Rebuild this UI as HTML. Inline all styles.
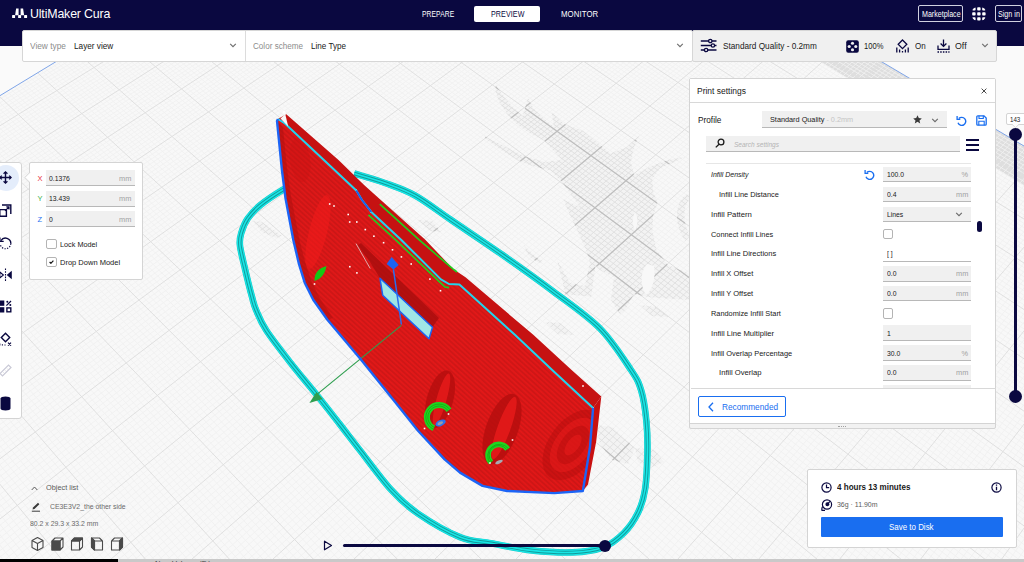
<!DOCTYPE html>
<html><head><meta charset="utf-8"><title>UltiMaker Cura</title>
<style>
*{box-sizing:border-box;margin:0;padding:0}
html,body{width:1024px;height:562px;overflow:hidden;background:#f8f8f8}
body{position:relative;font-family:"Liberation Sans","DejaVu Sans",sans-serif;font-size:8.5px;color:#191919}
.abs{position:absolute}
.t{position:absolute;white-space:nowrap;line-height:1}
#scene{position:absolute;left:0;top:0;width:1024px;height:562px}
#hdr{left:0;top:0;width:1024px;height:46px;background:#0a0840}
.nav{color:#fff;font-size:8.6px;letter-spacing:0.1px}
.pill{background:#fff;border-radius:2px}
.hbtn{border:1px solid #d0d0e0;border-radius:2px;color:#fff;font-size:8px;text-align:center}
#viewbar{left:22px;top:30px;width:671px;height:32px;background:#fff;border:1px solid #d6d6d6;border-radius:2px}
#setbar{left:692px;top:30px;width:305px;height:32px;background:#f0f0f0;border:1px solid #d6d6d6;border-radius:2px}
.g{color:#8c8c8c}
.panel{background:#fff;border:1px solid #d4d4d4;border-radius:2px}
.fld{position:absolute;background:#f0f0f0;border-bottom:1px solid #b8b8b8;height:16px}
.fld .v{position:absolute;left:2.5px;top:4.6px;font-size:8px;line-height:1;color:#191919;transform:scaleX(.85);transform-origin:0 0}
.fld .u{position:absolute;right:3px;top:4.6px;transform:scaleX(.92);transform-origin:100% 0;font-size:8px;line-height:1;color:#a0a0a0}
.cb{position:absolute;width:10.5px;height:10.5px;border:1px solid #b4b4b4;border-radius:2px;background:#fff}
.row{position:absolute;left:711px;font-size:8px;line-height:1;white-space:nowrap;color:#191919}
#logo{transform:scaleX(1.014);transform-origin:0 0;left:29.5px !important}
#n1{transform:scaleX(0.783);transform-origin:0 0;left:421.5px !important}
#n2{transform:scaleX(0.830);transform-origin:0 0;left:490.5px !important}
#n3{transform:scaleX(0.907);transform-origin:0 0;left:560.5px !important}
#mk{transform:scaleX(0.805);transform-origin:0 0;left:921.5px !important}
#si{transform:scaleX(0.814);transform-origin:0 0;left:998.0px !important}
#vt{transform:scaleX(0.978);transform-origin:0 0;left:30.0px !important}
#lv{transform:scaleX(0.967);transform-origin:0 0;left:74.0px !important}
#cs{transform:scaleX(0.954);transform-origin:0 0;left:253.0px !important}
#lt{transform:scaleX(0.953);transform-origin:0 0;left:311.0px !important}
#sq{transform:scaleX(0.915);transform-origin:0 0;left:722.5px !important}
#pc{transform:scaleX(0.842);transform-origin:0 0;left:864.0px !important}
#on{transform:scaleX(0.891);transform-origin:0 0;left:914.5px !important}
#off{transform:scaleX(0.979);transform-origin:0 0;left:954.5px !important}
#ps{transform:scaleX(0.923);transform-origin:0 0;left:697.0px !important}
#pf{transform:scaleX(0.898);transform-origin:0 0;left:697.5px !important}
#sq2{transform:scaleX(0.912);transform-origin:0 0;left:770.0px !important}
#ss{transform:scaleX(0.860);transform-origin:0 0;left:734.0px !important}
#row0{transform:scaleX(0.870);transform-origin:0 0;left:20.5px !important}
#row1{transform:scaleX(0.921);transform-origin:0 0;left:28.5px !important}
#row2{transform:scaleX(0.968);transform-origin:0 0;left:20.5px !important}
#row3{transform:scaleX(0.920);transform-origin:0 0;left:20.5px !important}
#row4{transform:scaleX(0.940);transform-origin:0 0;left:20.5px !important}
#row5{transform:scaleX(0.934);transform-origin:0 0;left:20.5px !important}
#row6{transform:scaleX(0.939);transform-origin:0 0;left:20.5px !important}
#row7{transform:scaleX(0.919);transform-origin:0 0;left:20.5px !important}
#row8{transform:scaleX(0.960);transform-origin:0 0;left:20.5px !important}
#row9{transform:scaleX(0.926);transform-origin:0 0;left:20.5px !important}
#row10{transform:scaleX(0.958);transform-origin:0 0;left:28.5px !important}
#rec{transform:scaleX(0.963);transform-origin:0 0;left:721.5px !important}
#tm{transform:scaleX(0.895);transform-origin:0 0;left:836.5px !important}
#mat{transform:scaleX(0.870);transform-origin:0 0;left:836.5px !important}
#sv{transform:scaleX(0.924);transform-origin:0 0;left:889.0px !important}
#ol{transform:scaleX(0.943);transform-origin:0 0;left:46.0px !important}
#on2{transform:scaleX(0.881);transform-origin:0 0;left:50.0px !important}
#dim{transform:scaleX(0.908);transform-origin:0 0;left:30.0px !important}
#lm{transform:scaleX(0.909);transform-origin:0 0;left:60.0px !important}
#ddm{transform:scaleX(0.939);transform-origin:0 0;left:60.0px !important}
#l143{transform:scaleX(0.813);transform-origin:0 0;left:1009.5px !important}
</style></head><body>
<svg id="scene" width="1024" height="562" viewBox="0 0 1024 562">
<defs><clipPath id="ghost"><path d="M496 85L501.4 93.5L512 106.3L522.7 116L528 97.8L533.4 108.5L544.1 119.1L554 127L551.6 111.7L563.3 123.4L583 131L598 143L610.5 153.5L627 147L639.4 135.3L634 147L630.8 162L634 174.9L651 166.3L668 160L685.3 156.7L659.7 168.5L652.2 179L653.2 192L657.5 202.6L653.2 215.5L652.2 230.4L656.5 250L668 265L690 274L690 300L660 298L648 297L634 294L625 310L619.7 313.9L611 299.7L614 276.9L600 270L595.5 265.5L591.2 296.8L565.6 294L557 259.8L570 283L585 286L590 262L586 249.7L577.4 230.4L570 215.5L563.5 199.4L580 207L561.4 181.3L550.5 170.4L533.4 166.2L518.5 160.8L501.4 150.1L486.4 139.4L484 136L501.4 144.8L522.7 155.5L544.1 161.9L562 160L544.1 140.5L531.3 134.1L518.5 125.6L507.8 114.9L499.2 102L495 89.2ZM687.4 194C676 200 672 222 685.3 241L690 236C682 222 683 206 690 198ZM640 305L655 307L668 317L652 316ZM253 221L262 222L282 236L276 238L262 232ZM596 425L612 427L635 448L628 464L612 460L600 444ZM635 448L655 450L664 462L650 468L638 462ZM418 220L432 221L441 232L430 231ZM524 245C530 252 536 258 543 261L540 263C532 260 526 254 524 245ZM545 322L560 323L574 335L558 334ZM336 222L352 224L372 240L360 240Z"/></clipPath>
<linearGradient id="rg" x1="0" y1="0" x2="1" y2="1"><stop offset="0" stop-color="#d41414"/><stop offset=".5" stop-color="#e41616"/><stop offset="1" stop-color="#e01212"/></linearGradient><pattern id="lay" width="3.6" height="3.6" patternUnits="userSpaceOnUse" patternTransform="rotate(42)"><rect width="3.6" height="3.6" fill="#e01a1a"/><rect y="1.9" width="3.6" height="1.7" fill="#c21717"/></pattern></defs>
<rect width="1024" height="562" fill="#fafafa"/>
<path d="M-309.0 283.2L463.5 -185.7L1316.6 319.2L572.8 1484.8Z" fill="#f8f8f8"/>
<path d="M438.2 -170.3L463.5 -185.7L1316.6 319.2L1296.3 350.9Z" fill="#dedede"/>
<path d="M-307.1 285.8L465.8 -184.3M-305.0 288.8L468.3 -182.8M-302.8 291.7L470.8 -181.3M-300.6 294.7L473.3 -179.8M-298.5 297.6L475.9 -178.4M-296.3 300.6L478.4 -176.8M-294.1 303.6L481.0 -175.3M-289.7 309.6L486.1 -172.3M-287.5 312.6L488.6 -170.8M-285.3 315.6L491.2 -169.3M-283.1 318.6L493.8 -167.8M-280.8 321.7L496.4 -166.2M-278.6 324.7L499.0 -164.7M-276.3 327.8L501.6 -163.2M-274.1 330.9L504.2 -161.6M-271.8 334.0L506.8 -160.1M-267.2 340.2L512.0 -157.0M-264.9 343.3L514.6 -155.4M-262.6 346.5L517.3 -153.8M-260.3 349.6L519.9 -152.3M-258.0 352.8L522.6 -150.7M-255.7 355.9L525.2 -149.1M-253.3 359.1L527.9 -147.6M-251.0 362.3L530.6 -146.0M-248.6 365.5L533.3 -144.4M-243.9 372.0L538.6 -141.2M-241.5 375.2L541.3 -139.6M-239.1 378.5L544.1 -138.0M-236.7 381.7L546.8 -136.4M-234.3 385.0L549.5 -134.8M-231.9 388.3L552.2 -133.2M-229.5 391.6L555.0 -131.5M-227.1 394.9L557.7 -129.9M-224.6 398.3L560.5 -128.3M-219.7 405.0L566.0 -125.0M-217.2 408.3L568.8 -123.4M-214.8 411.7L571.5 -121.7M-212.3 415.1L574.3 -120.1M-209.8 418.5L577.1 -118.4M-207.2 421.9L579.9 -116.8M-204.7 425.4L582.7 -115.1M-202.2 428.8L585.6 -113.4M-199.7 432.3L588.4 -111.8M-194.6 439.2L594.1 -108.4M-192.0 442.7L596.9 -106.7M-189.4 446.2L599.8 -105.0M-186.8 449.8L602.6 -103.3M-184.2 453.3L605.5 -101.6M-181.6 456.9L608.4 -99.9M-179.0 460.4L611.3 -98.2M-176.4 464.0L614.2 -96.5M-173.7 467.6L617.1 -94.8M-168.4 474.9L622.9 -91.3M-165.7 478.5L625.8 -89.6M-163.0 482.2L628.8 -87.9M-160.3 485.8L631.7 -86.1M-157.6 489.5L634.7 -84.4M-154.9 493.2L637.6 -82.6M-152.2 496.9L640.6 -80.9M-149.5 500.7L643.6 -79.1M-146.7 504.4L646.6 -77.3M-141.2 512.0L652.6 -73.8M-138.4 515.7L655.6 -72.0M-135.6 519.6L658.6 -70.2M-132.8 523.4L661.6 -68.4M-130.0 527.2L664.7 -66.6M-127.2 531.1L667.7 -64.8M-124.3 534.9L670.7 -63.0M-121.5 538.8L673.8 -61.2M-118.6 542.7L676.9 -59.4M-112.8 550.6L683.0 -55.7M-109.9 554.5L686.1 -53.9M-107.0 558.5L689.2 -52.1M-104.1 562.5L692.4 -50.2M-101.2 566.5L695.5 -48.4M-98.2 570.5L698.6 -46.5M-95.3 574.5L701.8 -44.7M-92.3 578.6L704.9 -42.8M-89.3 582.6L708.1 -40.9M-83.3 590.8L714.4 -37.2M-80.3 594.9L717.6 -35.3M-77.2 599.1L720.8 -33.4M-74.2 603.2L724.0 -31.5M-71.1 607.4L727.2 -29.6M-68.1 611.6L730.4 -27.7M-65.0 615.8L733.7 -25.8M-61.9 620.0L736.9 -23.9M-58.8 624.3L740.1 -22.0M-52.5 632.8L746.7 -18.1M-49.3 637.1L749.9 -16.2M-46.2 641.4L753.2 -14.2M-43.0 645.8L756.5 -12.3M-39.8 650.1L759.8 -10.3M-36.6 654.5L763.2 -8.3M-33.3 658.9L766.5 -6.4M-30.1 663.3L769.8 -4.4M-26.9 667.7L773.2 -2.4M-20.3 676.7L779.9 1.6M-17.0 681.2L783.3 3.6M-13.7 685.7L786.6 5.6M-10.4 690.2L790.0 7.6M-7.0 694.7L793.4 9.6M-3.7 699.3L796.9 11.6M-0.3 703.9L800.3 13.6M3.1 708.5L803.7 15.7M6.5 713.2L807.2 17.7M13.3 722.5L814.1 21.8M16.8 727.2L817.6 23.9M20.2 731.9L821.1 25.9M23.7 736.6L824.6 28.0M27.2 741.4L828.1 30.1M30.7 746.2L831.6 32.2M34.2 751.0L835.1 34.2M37.8 755.8L838.7 36.3M41.3 760.7L842.2 38.4M48.5 770.4L849.3 42.7M52.1 775.3L852.9 44.8M55.7 780.3L856.5 46.9M59.4 785.2L860.1 49.0M63.0 790.2L863.7 51.2M66.7 795.2L867.4 53.3M70.4 800.3L871.0 55.5M74.1 805.3L874.7 57.6M77.8 810.4L878.3 59.8M85.3 820.6L885.7 64.2M89.1 825.8L889.4 66.4M92.9 831.0L893.1 68.5M96.7 836.2L896.8 70.7M100.6 841.4L900.5 73.0M104.4 846.6L904.3 75.2M108.3 851.9L908.0 77.4M112.2 857.2L911.8 79.6M116.1 862.5L915.6 81.9M124.0 873.3L923.1 86.3M127.9 878.7L926.9 88.6M131.9 884.1L930.8 90.9M135.9 889.6L934.6 93.1M139.9 895.0L938.5 95.4M144.0 900.6L942.3 97.7M148.1 906.1L946.2 100.0M152.1 911.7L950.1 102.3M156.2 917.2L954.0 104.6M164.5 928.5L961.8 109.2M168.7 934.2L965.7 111.5M172.9 939.9L969.7 113.9M177.1 945.6L973.6 116.2M181.3 951.4L977.6 118.6M185.5 957.2L981.6 120.9M189.8 963.0L985.6 123.3M194.1 968.8L989.6 125.7M198.4 974.7L993.6 128.1M207.1 986.6L1001.7 132.8M211.5 992.5L1005.8 135.2M215.9 998.5L1009.8 137.7M220.3 1004.6L1013.9 140.1M224.8 1010.6L1018.0 142.5M229.2 1016.7L1022.1 144.9M233.7 1022.8L1026.3 147.4M238.3 1029.0L1030.4 149.8M242.8 1035.2L1034.6 152.3M251.9 1047.7L1042.9 157.2M256.6 1053.9L1047.1 159.7M261.2 1060.3L1051.3 162.2M265.9 1066.6L1055.5 164.7M270.5 1073.0L1059.8 167.2M275.3 1079.4L1064.0 169.7M280.0 1085.9L1068.3 172.2M284.7 1092.4L1072.6 174.8M289.5 1098.9L1076.9 177.3M299.2 1112.0L1085.5 182.4M304.0 1118.6L1089.8 185.0M308.9 1125.3L1094.2 187.6M313.9 1132.0L1098.6 190.2M318.8 1138.7L1102.9 192.8M323.8 1145.5L1107.3 195.4M328.8 1152.3L1111.7 198.0M333.8 1159.2L1116.2 200.6M338.8 1166.0L1120.6 203.2M349.0 1179.9L1129.5 208.5M354.2 1186.9L1134.0 211.1M359.3 1194.0L1138.5 213.8M364.5 1201.0L1143.0 216.5M369.7 1208.1L1147.6 219.2M375.0 1215.3L1152.1 221.9M380.3 1222.5L1156.7 224.6M385.6 1229.7L1161.3 227.3M390.9 1237.0L1165.9 230.0M401.7 1251.7L1175.1 235.5M407.1 1259.1L1179.7 238.2M412.6 1266.5L1184.4 241.0M418.1 1274.0L1189.1 243.7M423.6 1281.5L1193.8 246.5M429.1 1289.1L1198.5 249.3M434.7 1296.7L1203.2 252.1M440.3 1304.4L1207.9 254.9M446.0 1312.1L1212.7 257.7M457.4 1327.6L1222.3 263.4M463.2 1335.5L1227.1 266.2M468.9 1343.3L1231.9 269.1M474.8 1351.3L1236.7 271.9M480.6 1359.2L1241.6 274.8M486.5 1367.3L1246.5 277.7M492.4 1375.3L1251.3 280.6M498.4 1383.5L1256.3 283.5M504.4 1391.6L1261.2 286.4M516.5 1408.1L1271.1 292.3M522.6 1416.4L1276.1 295.2M528.7 1424.8L1281.1 298.2M534.9 1433.2L1286.1 301.1M541.1 1441.7L1291.1 304.1M547.4 1450.2L1296.2 307.1M553.6 1458.8L1301.2 310.1M560.0 1467.4L1306.3 313.1M566.3 1476.1L1311.4 316.1M-304.1 280.2L578.5 1475.7M-299.1 277.2L584.3 1466.7M-294.2 274.2L590.0 1457.8M-289.3 271.2L595.7 1448.9M-284.4 268.3L601.3 1440.1M-279.5 265.3L606.9 1431.3M-274.7 262.4L612.4 1422.6M-269.8 259.4L618.0 1413.9M-265.0 256.5L623.5 1405.3M-255.4 250.7L634.4 1388.3M-250.7 247.8L639.7 1379.8M-245.9 244.9L645.1 1371.4M-241.2 242.0L650.4 1363.1M-236.4 239.2L655.7 1354.8M-231.7 236.3L661.0 1346.5M-227.1 233.5L666.2 1338.3M-222.4 230.6L671.4 1330.2M-217.7 227.8L676.6 1322.1M-208.5 222.2L686.8 1306.0M-203.9 219.4L691.9 1298.1M-199.3 216.6L696.9 1290.2M-194.7 213.9L702.0 1282.3M-190.2 211.1L706.9 1274.5M-185.7 208.3L711.9 1266.7M-181.1 205.6L716.8 1259.0M-176.6 202.9L721.7 1251.4M-172.1 200.1L726.6 1243.7M-163.2 194.7L736.2 1228.6M-158.8 192.0L741.0 1221.1M-154.3 189.3L745.8 1213.7M-149.9 186.7L750.5 1206.2M-145.5 184.0L755.2 1198.9M-141.2 181.3L759.9 1191.6M-136.8 178.7L764.5 1184.3M-132.4 176.0L769.1 1177.0M-128.1 173.4L773.7 1169.8M-119.5 168.2L782.9 1155.6M-115.2 165.6L787.4 1148.5M-110.9 163.0L791.9 1141.4M-106.7 160.4L796.3 1134.4M-102.4 157.8L800.8 1127.5M-98.2 155.2L805.2 1120.6M-94.0 152.7L809.6 1113.7M-89.8 150.1L813.9 1106.8M-85.6 147.6L818.3 1100.0M-77.2 142.5L826.9 1086.5M-73.1 140.0L831.2 1079.8M-69.0 137.5L835.4 1073.2M-64.8 135.0L839.6 1066.6M-60.7 132.5L843.8 1060.0M-56.6 130.0L848.0 1053.4M-52.6 127.6L852.2 1046.9M-48.5 125.1L856.3 1040.4M-44.4 122.6L860.4 1034.0M-36.4 117.7L868.6 1021.2M-32.4 115.3L872.6 1014.9M-28.4 112.9L876.6 1008.6M-24.4 110.5L880.6 1002.3M-20.4 108.1L884.6 996.1M-16.5 105.7L888.6 989.9M-12.5 103.3L892.5 983.7M-8.6 100.9L896.4 977.5M-4.7 98.5L900.3 971.4M3.1 93.8L908.1 959.3M7.0 91.4L911.9 953.3M10.9 89.1L915.7 947.3M14.7 86.7L919.5 941.4M18.6 84.4L923.3 935.4M22.4 82.1L927.1 929.6M26.2 79.8L930.8 923.7M30.0 77.4L934.5 917.9M33.8 75.1L938.2 912.1M41.4 70.6L945.6 900.6M45.1 68.3L949.2 894.8M48.9 66.0L952.8 889.2M52.6 63.7L956.5 883.5M56.3 61.5L960.0 877.9M60.0 59.2L963.6 872.3M63.7 57.0L967.2 866.7M67.4 54.8L970.7 861.2M71.1 52.5L974.2 855.7M78.4 48.1L981.2 844.7M82.0 45.9L984.7 839.3M85.7 43.7L988.1 833.9M89.3 41.5L991.6 828.5M92.9 39.3L995.0 823.1M96.5 37.1L998.4 817.8M100.1 34.9L1001.8 812.5M103.6 32.8L1005.1 807.2M107.2 30.6L1008.5 802.0M114.3 26.3L1015.1 791.6M117.8 24.2L1018.4 786.4M121.3 22.0L1021.7 781.3M124.8 19.9L1025.0 776.1M128.3 17.8L1028.2 771.0M131.8 15.7L1031.5 766.0M135.3 13.6L1034.7 760.9M138.7 11.5L1037.9 755.9M142.2 9.4L1041.1 750.9M149.0 5.2L1047.4 740.9M152.5 3.1L1050.6 736.0M155.9 1.1L1053.7 731.1M159.3 -1.0L1056.8 726.2M162.7 -3.1L1059.9 721.4M166.0 -5.1L1063.0 716.5M169.4 -7.1L1066.1 711.7M172.8 -9.2L1069.1 706.9M176.1 -11.2L1072.2 702.1M182.8 -15.3L1078.2 692.7M186.1 -17.3L1081.2 688.0M189.4 -19.3L1084.2 683.3M192.7 -21.3L1087.2 678.6M196.0 -23.3L1090.2 674.0M199.3 -25.3L1093.1 669.3M202.5 -27.2L1096.0 664.7M205.8 -29.2L1099.0 660.2M209.0 -31.2L1101.9 655.6M215.5 -35.1L1107.7 646.6M218.7 -37.1L1110.5 642.1M221.9 -39.0L1113.4 637.6M225.1 -41.0L1116.2 633.1M228.3 -42.9L1119.1 628.7M231.5 -44.8L1121.9 624.3M234.7 -46.8L1124.7 619.9M237.8 -48.7L1127.5 615.5M241.0 -50.6L1130.2 611.1M247.3 -54.4L1135.8 602.5M250.4 -56.3L1138.5 598.2M253.5 -58.2L1141.2 593.9M256.6 -60.1L1144.0 589.6M259.7 -61.9L1146.7 585.4M262.8 -63.8L1149.4 581.2M265.9 -65.7L1152.1 577.0M268.9 -67.6L1154.7 572.8M272.0 -69.4L1157.4 568.6M278.1 -73.1L1162.7 560.3M281.1 -75.0L1165.3 556.2M284.2 -76.8L1167.9 552.1M287.2 -78.6L1170.5 548.0M290.2 -80.5L1173.1 544.0M293.2 -82.3L1175.7 539.9M296.2 -84.1L1178.3 535.9M299.2 -85.9L1180.8 531.9M302.1 -87.7L1183.4 527.9M308.1 -91.3L1188.4 519.9M311.0 -93.1L1191.0 516.0M314.0 -94.9L1193.5 512.1M316.9 -96.7L1196.0 508.2M319.8 -98.4L1198.5 504.3M322.7 -100.2L1200.9 500.4M325.6 -102.0L1203.4 496.5M328.5 -103.7L1205.8 492.7M331.4 -105.5L1208.3 488.8M337.2 -109.0L1213.2 481.2M340.1 -110.7L1215.6 477.4M342.9 -112.5L1218.0 473.7M345.8 -114.2L1220.4 469.9M348.6 -115.9L1222.7 466.2M351.4 -117.6L1225.1 462.5M354.3 -119.3L1227.5 458.8M357.1 -121.1L1229.8 455.1M359.9 -122.8L1232.2 451.4M365.5 -126.2L1236.9 444.1M368.3 -127.9L1239.2 440.5M371.1 -129.5L1241.5 436.8M373.8 -131.2L1243.8 433.2M376.6 -132.9L1246.1 429.7M379.4 -134.6L1248.3 426.1M382.1 -136.2L1250.6 422.5M384.9 -137.9L1252.9 419.0M387.6 -139.6L1255.1 415.4M393.0 -142.9L1259.6 408.4M395.8 -144.5L1261.8 404.9M398.5 -146.2L1264.1 401.5M401.2 -147.8L1266.3 398.0M403.9 -149.4L1268.5 394.6M406.5 -151.1L1270.7 391.1M409.2 -152.7L1272.8 387.7M411.9 -154.3L1275.0 384.3M414.5 -155.9L1277.2 380.9M419.8 -159.1L1281.5 374.2M422.5 -160.7L1283.6 370.8M425.1 -162.3L1285.8 367.5M427.7 -163.9L1287.9 364.1M430.4 -165.5L1290.0 360.8M433.0 -167.1L1292.1 357.5M435.6 -168.7L1294.2 354.2M438.2 -170.3L1296.3 350.9M440.8 -171.8L1298.4 347.7M445.9 -175.0L1302.5 341.2M448.5 -176.5L1304.6 338.0M451.1 -178.1L1306.6 334.7M453.6 -179.6L1308.7 331.5M456.2 -181.2L1310.7 328.4M458.7 -182.7L1312.7 325.2M461.3 -184.3L1314.8 322.0" stroke="#f0f0f0" stroke-width=".9" fill="none"/>
<path d="M-291.9 306.6L483.5 -173.8M-269.5 337.1L509.4 -158.5M-246.3 368.7L536.0 -142.8M-222.2 401.6L563.2 -126.7M-197.1 435.7L591.2 -110.1M-171.1 471.2L620.0 -93.1M-144.0 508.2L649.6 -75.6M-115.7 546.6L680.0 -57.6M-86.3 586.7L711.2 -39.1M-55.6 628.5L743.4 -20.0M-23.6 672.2L776.5 -0.4M9.9 717.8L810.6 19.8M44.9 765.5L845.8 40.6M81.6 815.5L882.0 62.0M120.0 867.9L919.3 84.1M160.4 922.9L957.9 106.9M202.8 980.6L997.7 130.4M247.4 1041.4L1038.7 154.8M294.3 1105.4L1081.2 179.9M343.9 1173.0L1125.1 205.8M396.3 1244.3L1170.5 232.7M451.7 1319.8L1217.5 260.5M510.4 1399.8L1266.1 289.3M572.8 1484.8L1316.6 319.2M-309.0 283.2L572.8 1484.8M-260.2 253.6L628.9 1396.8M-213.1 225.0L681.7 1314.0M-167.7 197.4L731.4 1236.1M-123.8 170.8L778.3 1162.7M-81.4 145.1L822.6 1093.3M-40.4 120.2L864.5 1027.6M-0.8 96.1L904.2 965.4M37.6 72.8L941.9 906.3M74.7 50.3L977.7 850.2M110.7 28.5L1011.8 796.8M145.6 7.3L1044.3 745.9M179.4 -13.2L1075.2 697.4M212.3 -33.2L1104.8 651.1M244.1 -52.5L1133.0 606.8M275.1 -71.3L1160.0 564.5M305.1 -89.5L1185.9 523.9M334.3 -107.2L1210.7 485.0M362.7 -124.5L1234.5 447.7M390.3 -141.2L1257.4 411.9M417.2 -157.5L1279.3 377.5M443.4 -173.4L1300.4 344.4" stroke="#e0e0e0" stroke-width="1" fill="none"/>
<g clip-path="url(#ghost)"><rect width="1024" height="562" fill="#f3f3f3"/><path d="M-307.1 285.8L465.8 -184.3M-305.0 288.8L468.3 -182.8M-302.8 291.7L470.8 -181.3M-300.6 294.7L473.3 -179.8M-298.5 297.6L475.9 -178.4M-296.3 300.6L478.4 -176.8M-294.1 303.6L481.0 -175.3M-289.7 309.6L486.1 -172.3M-287.5 312.6L488.6 -170.8M-285.3 315.6L491.2 -169.3M-283.1 318.6L493.8 -167.8M-280.8 321.7L496.4 -166.2M-278.6 324.7L499.0 -164.7M-276.3 327.8L501.6 -163.2M-274.1 330.9L504.2 -161.6M-271.8 334.0L506.8 -160.1M-267.2 340.2L512.0 -157.0M-264.9 343.3L514.6 -155.4M-262.6 346.5L517.3 -153.8M-260.3 349.6L519.9 -152.3M-258.0 352.8L522.6 -150.7M-255.7 355.9L525.2 -149.1M-253.3 359.1L527.9 -147.6M-251.0 362.3L530.6 -146.0M-248.6 365.5L533.3 -144.4M-243.9 372.0L538.6 -141.2M-241.5 375.2L541.3 -139.6M-239.1 378.5L544.1 -138.0M-236.7 381.7L546.8 -136.4M-234.3 385.0L549.5 -134.8M-231.9 388.3L552.2 -133.2M-229.5 391.6L555.0 -131.5M-227.1 394.9L557.7 -129.9M-224.6 398.3L560.5 -128.3M-219.7 405.0L566.0 -125.0M-217.2 408.3L568.8 -123.4M-214.8 411.7L571.5 -121.7M-212.3 415.1L574.3 -120.1M-209.8 418.5L577.1 -118.4M-207.2 421.9L579.9 -116.8M-204.7 425.4L582.7 -115.1M-202.2 428.8L585.6 -113.4M-199.7 432.3L588.4 -111.8M-194.6 439.2L594.1 -108.4M-192.0 442.7L596.9 -106.7M-189.4 446.2L599.8 -105.0M-186.8 449.8L602.6 -103.3M-184.2 453.3L605.5 -101.6M-181.6 456.9L608.4 -99.9M-179.0 460.4L611.3 -98.2M-176.4 464.0L614.2 -96.5M-173.7 467.6L617.1 -94.8M-168.4 474.9L622.9 -91.3M-165.7 478.5L625.8 -89.6M-163.0 482.2L628.8 -87.9M-160.3 485.8L631.7 -86.1M-157.6 489.5L634.7 -84.4M-154.9 493.2L637.6 -82.6M-152.2 496.9L640.6 -80.9M-149.5 500.7L643.6 -79.1M-146.7 504.4L646.6 -77.3M-141.2 512.0L652.6 -73.8M-138.4 515.7L655.6 -72.0M-135.6 519.6L658.6 -70.2M-132.8 523.4L661.6 -68.4M-130.0 527.2L664.7 -66.6M-127.2 531.1L667.7 -64.8M-124.3 534.9L670.7 -63.0M-121.5 538.8L673.8 -61.2M-118.6 542.7L676.9 -59.4M-112.8 550.6L683.0 -55.7M-109.9 554.5L686.1 -53.9M-107.0 558.5L689.2 -52.1M-104.1 562.5L692.4 -50.2M-101.2 566.5L695.5 -48.4M-98.2 570.5L698.6 -46.5M-95.3 574.5L701.8 -44.7M-92.3 578.6L704.9 -42.8M-89.3 582.6L708.1 -40.9M-83.3 590.8L714.4 -37.2M-80.3 594.9L717.6 -35.3M-77.2 599.1L720.8 -33.4M-74.2 603.2L724.0 -31.5M-71.1 607.4L727.2 -29.6M-68.1 611.6L730.4 -27.7M-65.0 615.8L733.7 -25.8M-61.9 620.0L736.9 -23.9M-58.8 624.3L740.1 -22.0M-52.5 632.8L746.7 -18.1M-49.3 637.1L749.9 -16.2M-46.2 641.4L753.2 -14.2M-43.0 645.8L756.5 -12.3M-39.8 650.1L759.8 -10.3M-36.6 654.5L763.2 -8.3M-33.3 658.9L766.5 -6.4M-30.1 663.3L769.8 -4.4M-26.9 667.7L773.2 -2.4M-20.3 676.7L779.9 1.6M-17.0 681.2L783.3 3.6M-13.7 685.7L786.6 5.6M-10.4 690.2L790.0 7.6M-7.0 694.7L793.4 9.6M-3.7 699.3L796.9 11.6M-0.3 703.9L800.3 13.6M3.1 708.5L803.7 15.7M6.5 713.2L807.2 17.7M13.3 722.5L814.1 21.8M16.8 727.2L817.6 23.9M20.2 731.9L821.1 25.9M23.7 736.6L824.6 28.0M27.2 741.4L828.1 30.1M30.7 746.2L831.6 32.2M34.2 751.0L835.1 34.2M37.8 755.8L838.7 36.3M41.3 760.7L842.2 38.4M48.5 770.4L849.3 42.7M52.1 775.3L852.9 44.8M55.7 780.3L856.5 46.9M59.4 785.2L860.1 49.0M63.0 790.2L863.7 51.2M66.7 795.2L867.4 53.3M70.4 800.3L871.0 55.5M74.1 805.3L874.7 57.6M77.8 810.4L878.3 59.8M85.3 820.6L885.7 64.2M89.1 825.8L889.4 66.4M92.9 831.0L893.1 68.5M96.7 836.2L896.8 70.7M100.6 841.4L900.5 73.0M104.4 846.6L904.3 75.2M108.3 851.9L908.0 77.4M112.2 857.2L911.8 79.6M116.1 862.5L915.6 81.9M124.0 873.3L923.1 86.3M127.9 878.7L926.9 88.6M131.9 884.1L930.8 90.9M135.9 889.6L934.6 93.1M139.9 895.0L938.5 95.4M144.0 900.6L942.3 97.7M148.1 906.1L946.2 100.0M152.1 911.7L950.1 102.3M156.2 917.2L954.0 104.6M164.5 928.5L961.8 109.2M168.7 934.2L965.7 111.5M172.9 939.9L969.7 113.9M177.1 945.6L973.6 116.2M181.3 951.4L977.6 118.6M185.5 957.2L981.6 120.9M189.8 963.0L985.6 123.3M194.1 968.8L989.6 125.7M198.4 974.7L993.6 128.1M207.1 986.6L1001.7 132.8M211.5 992.5L1005.8 135.2M215.9 998.5L1009.8 137.7M220.3 1004.6L1013.9 140.1M224.8 1010.6L1018.0 142.5M229.2 1016.7L1022.1 144.9M233.7 1022.8L1026.3 147.4M238.3 1029.0L1030.4 149.8M242.8 1035.2L1034.6 152.3M251.9 1047.7L1042.9 157.2M256.6 1053.9L1047.1 159.7M261.2 1060.3L1051.3 162.2M265.9 1066.6L1055.5 164.7M270.5 1073.0L1059.8 167.2M275.3 1079.4L1064.0 169.7M280.0 1085.9L1068.3 172.2M284.7 1092.4L1072.6 174.8M289.5 1098.9L1076.9 177.3M299.2 1112.0L1085.5 182.4M304.0 1118.6L1089.8 185.0M308.9 1125.3L1094.2 187.6M313.9 1132.0L1098.6 190.2M318.8 1138.7L1102.9 192.8M323.8 1145.5L1107.3 195.4M328.8 1152.3L1111.7 198.0M333.8 1159.2L1116.2 200.6M338.8 1166.0L1120.6 203.2M349.0 1179.9L1129.5 208.5M354.2 1186.9L1134.0 211.1M359.3 1194.0L1138.5 213.8M364.5 1201.0L1143.0 216.5M369.7 1208.1L1147.6 219.2M375.0 1215.3L1152.1 221.9M380.3 1222.5L1156.7 224.6M385.6 1229.7L1161.3 227.3M390.9 1237.0L1165.9 230.0M401.7 1251.7L1175.1 235.5M407.1 1259.1L1179.7 238.2M412.6 1266.5L1184.4 241.0M418.1 1274.0L1189.1 243.7M423.6 1281.5L1193.8 246.5M429.1 1289.1L1198.5 249.3M434.7 1296.7L1203.2 252.1M440.3 1304.4L1207.9 254.9M446.0 1312.1L1212.7 257.7M457.4 1327.6L1222.3 263.4M463.2 1335.5L1227.1 266.2M468.9 1343.3L1231.9 269.1M474.8 1351.3L1236.7 271.9M480.6 1359.2L1241.6 274.8M486.5 1367.3L1246.5 277.7M492.4 1375.3L1251.3 280.6M498.4 1383.5L1256.3 283.5M504.4 1391.6L1261.2 286.4M516.5 1408.1L1271.1 292.3M522.6 1416.4L1276.1 295.2M528.7 1424.8L1281.1 298.2M534.9 1433.2L1286.1 301.1M541.1 1441.7L1291.1 304.1M547.4 1450.2L1296.2 307.1M553.6 1458.8L1301.2 310.1M560.0 1467.4L1306.3 313.1M566.3 1476.1L1311.4 316.1M-304.1 280.2L578.5 1475.7M-299.1 277.2L584.3 1466.7M-294.2 274.2L590.0 1457.8M-289.3 271.2L595.7 1448.9M-284.4 268.3L601.3 1440.1M-279.5 265.3L606.9 1431.3M-274.7 262.4L612.4 1422.6M-269.8 259.4L618.0 1413.9M-265.0 256.5L623.5 1405.3M-255.4 250.7L634.4 1388.3M-250.7 247.8L639.7 1379.8M-245.9 244.9L645.1 1371.4M-241.2 242.0L650.4 1363.1M-236.4 239.2L655.7 1354.8M-231.7 236.3L661.0 1346.5M-227.1 233.5L666.2 1338.3M-222.4 230.6L671.4 1330.2M-217.7 227.8L676.6 1322.1M-208.5 222.2L686.8 1306.0M-203.9 219.4L691.9 1298.1M-199.3 216.6L696.9 1290.2M-194.7 213.9L702.0 1282.3M-190.2 211.1L706.9 1274.5M-185.7 208.3L711.9 1266.7M-181.1 205.6L716.8 1259.0M-176.6 202.9L721.7 1251.4M-172.1 200.1L726.6 1243.7M-163.2 194.7L736.2 1228.6M-158.8 192.0L741.0 1221.1M-154.3 189.3L745.8 1213.7M-149.9 186.7L750.5 1206.2M-145.5 184.0L755.2 1198.9M-141.2 181.3L759.9 1191.6M-136.8 178.7L764.5 1184.3M-132.4 176.0L769.1 1177.0M-128.1 173.4L773.7 1169.8M-119.5 168.2L782.9 1155.6M-115.2 165.6L787.4 1148.5M-110.9 163.0L791.9 1141.4M-106.7 160.4L796.3 1134.4M-102.4 157.8L800.8 1127.5M-98.2 155.2L805.2 1120.6M-94.0 152.7L809.6 1113.7M-89.8 150.1L813.9 1106.8M-85.6 147.6L818.3 1100.0M-77.2 142.5L826.9 1086.5M-73.1 140.0L831.2 1079.8M-69.0 137.5L835.4 1073.2M-64.8 135.0L839.6 1066.6M-60.7 132.5L843.8 1060.0M-56.6 130.0L848.0 1053.4M-52.6 127.6L852.2 1046.9M-48.5 125.1L856.3 1040.4M-44.4 122.6L860.4 1034.0M-36.4 117.7L868.6 1021.2M-32.4 115.3L872.6 1014.9M-28.4 112.9L876.6 1008.6M-24.4 110.5L880.6 1002.3M-20.4 108.1L884.6 996.1M-16.5 105.7L888.6 989.9M-12.5 103.3L892.5 983.7M-8.6 100.9L896.4 977.5M-4.7 98.5L900.3 971.4M3.1 93.8L908.1 959.3M7.0 91.4L911.9 953.3M10.9 89.1L915.7 947.3M14.7 86.7L919.5 941.4M18.6 84.4L923.3 935.4M22.4 82.1L927.1 929.6M26.2 79.8L930.8 923.7M30.0 77.4L934.5 917.9M33.8 75.1L938.2 912.1M41.4 70.6L945.6 900.6M45.1 68.3L949.2 894.8M48.9 66.0L952.8 889.2M52.6 63.7L956.5 883.5M56.3 61.5L960.0 877.9M60.0 59.2L963.6 872.3M63.7 57.0L967.2 866.7M67.4 54.8L970.7 861.2M71.1 52.5L974.2 855.7M78.4 48.1L981.2 844.7M82.0 45.9L984.7 839.3M85.7 43.7L988.1 833.9M89.3 41.5L991.6 828.5M92.9 39.3L995.0 823.1M96.5 37.1L998.4 817.8M100.1 34.9L1001.8 812.5M103.6 32.8L1005.1 807.2M107.2 30.6L1008.5 802.0M114.3 26.3L1015.1 791.6M117.8 24.2L1018.4 786.4M121.3 22.0L1021.7 781.3M124.8 19.9L1025.0 776.1M128.3 17.8L1028.2 771.0M131.8 15.7L1031.5 766.0M135.3 13.6L1034.7 760.9M138.7 11.5L1037.9 755.9M142.2 9.4L1041.1 750.9M149.0 5.2L1047.4 740.9M152.5 3.1L1050.6 736.0M155.9 1.1L1053.7 731.1M159.3 -1.0L1056.8 726.2M162.7 -3.1L1059.9 721.4M166.0 -5.1L1063.0 716.5M169.4 -7.1L1066.1 711.7M172.8 -9.2L1069.1 706.9M176.1 -11.2L1072.2 702.1M182.8 -15.3L1078.2 692.7M186.1 -17.3L1081.2 688.0M189.4 -19.3L1084.2 683.3M192.7 -21.3L1087.2 678.6M196.0 -23.3L1090.2 674.0M199.3 -25.3L1093.1 669.3M202.5 -27.2L1096.0 664.7M205.8 -29.2L1099.0 660.2M209.0 -31.2L1101.9 655.6M215.5 -35.1L1107.7 646.6M218.7 -37.1L1110.5 642.1M221.9 -39.0L1113.4 637.6M225.1 -41.0L1116.2 633.1M228.3 -42.9L1119.1 628.7M231.5 -44.8L1121.9 624.3M234.7 -46.8L1124.7 619.9M237.8 -48.7L1127.5 615.5M241.0 -50.6L1130.2 611.1M247.3 -54.4L1135.8 602.5M250.4 -56.3L1138.5 598.2M253.5 -58.2L1141.2 593.9M256.6 -60.1L1144.0 589.6M259.7 -61.9L1146.7 585.4M262.8 -63.8L1149.4 581.2M265.9 -65.7L1152.1 577.0M268.9 -67.6L1154.7 572.8M272.0 -69.4L1157.4 568.6M278.1 -73.1L1162.7 560.3M281.1 -75.0L1165.3 556.2M284.2 -76.8L1167.9 552.1M287.2 -78.6L1170.5 548.0M290.2 -80.5L1173.1 544.0M293.2 -82.3L1175.7 539.9M296.2 -84.1L1178.3 535.9M299.2 -85.9L1180.8 531.9M302.1 -87.7L1183.4 527.9M308.1 -91.3L1188.4 519.9M311.0 -93.1L1191.0 516.0M314.0 -94.9L1193.5 512.1M316.9 -96.7L1196.0 508.2M319.8 -98.4L1198.5 504.3M322.7 -100.2L1200.9 500.4M325.6 -102.0L1203.4 496.5M328.5 -103.7L1205.8 492.7M331.4 -105.5L1208.3 488.8M337.2 -109.0L1213.2 481.2M340.1 -110.7L1215.6 477.4M342.9 -112.5L1218.0 473.7M345.8 -114.2L1220.4 469.9M348.6 -115.9L1222.7 466.2M351.4 -117.6L1225.1 462.5M354.3 -119.3L1227.5 458.8M357.1 -121.1L1229.8 455.1M359.9 -122.8L1232.2 451.4M365.5 -126.2L1236.9 444.1M368.3 -127.9L1239.2 440.5M371.1 -129.5L1241.5 436.8M373.8 -131.2L1243.8 433.2M376.6 -132.9L1246.1 429.7M379.4 -134.6L1248.3 426.1M382.1 -136.2L1250.6 422.5M384.9 -137.9L1252.9 419.0M387.6 -139.6L1255.1 415.4M393.0 -142.9L1259.6 408.4M395.8 -144.5L1261.8 404.9M398.5 -146.2L1264.1 401.5M401.2 -147.8L1266.3 398.0M403.9 -149.4L1268.5 394.6M406.5 -151.1L1270.7 391.1M409.2 -152.7L1272.8 387.7M411.9 -154.3L1275.0 384.3M414.5 -155.9L1277.2 380.9M419.8 -159.1L1281.5 374.2M422.5 -160.7L1283.6 370.8M425.1 -162.3L1285.8 367.5M427.7 -163.9L1287.9 364.1M430.4 -165.5L1290.0 360.8M433.0 -167.1L1292.1 357.5M435.6 -168.7L1294.2 354.2M438.2 -170.3L1296.3 350.9M440.8 -171.8L1298.4 347.7M445.9 -175.0L1302.5 341.2M448.5 -176.5L1304.6 338.0M451.1 -178.1L1306.6 334.7M453.6 -179.6L1308.7 331.5M456.2 -181.2L1310.7 328.4M458.7 -182.7L1312.7 325.2M461.3 -184.3L1314.8 322.0" stroke="#dfdfdf" stroke-width=".9" fill="none"/><path d="M-291.9 306.6L483.5 -173.8M-269.5 337.1L509.4 -158.5M-246.3 368.7L536.0 -142.8M-222.2 401.6L563.2 -126.7M-197.1 435.7L591.2 -110.1M-171.1 471.2L620.0 -93.1M-144.0 508.2L649.6 -75.6M-115.7 546.6L680.0 -57.6M-86.3 586.7L711.2 -39.1M-55.6 628.5L743.4 -20.0M-23.6 672.2L776.5 -0.4M9.9 717.8L810.6 19.8M44.9 765.5L845.8 40.6M81.6 815.5L882.0 62.0M120.0 867.9L919.3 84.1M160.4 922.9L957.9 106.9M202.8 980.6L997.7 130.4M247.4 1041.4L1038.7 154.8M294.3 1105.4L1081.2 179.9M343.9 1173.0L1125.1 205.8M396.3 1244.3L1170.5 232.7M451.7 1319.8L1217.5 260.5M510.4 1399.8L1266.1 289.3M572.8 1484.8L1316.6 319.2M-309.0 283.2L572.8 1484.8M-260.2 253.6L628.9 1396.8M-213.1 225.0L681.7 1314.0M-167.7 197.4L731.4 1236.1M-123.8 170.8L778.3 1162.7M-81.4 145.1L822.6 1093.3M-40.4 120.2L864.5 1027.6M-0.8 96.1L904.2 965.4M37.6 72.8L941.9 906.3M74.7 50.3L977.7 850.2M110.7 28.5L1011.8 796.8M145.6 7.3L1044.3 745.9M179.4 -13.2L1075.2 697.4M212.3 -33.2L1104.8 651.1M244.1 -52.5L1133.0 606.8M275.1 -71.3L1160.0 564.5M305.1 -89.5L1185.9 523.9M334.3 -107.2L1210.7 485.0M362.7 -124.5L1234.5 447.7M390.3 -141.2L1257.4 411.9M417.2 -157.5L1279.3 377.5M443.4 -173.4L1300.4 344.4" stroke="#bebebe" stroke-width="1.3" fill="none"/><path d="M635 212C632 217 632 225 635 230C638 225 638 217 635 212ZM647 264C640 272 640 286 646 295C653 290 656 276 654 266Z" fill="#f8f8f8"/></g>
<path d="M-309.0 283.2L463.5 -185.7M463.5 -185.7L1316.6 319.2" stroke="#7fa5e8" stroke-width="1" fill="none"/>
<path d="M354.2 173.5C359.3 175.1 374.8 179.3 385.0 183.0C395.2 186.7 404.3 189.4 415.3 195.6C426.3 201.8 436.7 210.1 451.2 220.0C465.7 229.9 485.3 242.9 502.4 254.8C519.4 266.7 537.2 279.3 553.5 291.6C569.8 303.9 587.1 315.4 600.0 328.5C612.9 341.6 624.1 359.7 631.0 370.0C637.9 380.3 638.6 382.0 641.2 390.5C643.8 399.0 645.4 411.0 646.4 421.2C647.4 431.4 647.6 440.8 647.4 451.9C647.2 463.0 646.8 477.8 645.3 487.9C643.8 498.0 641.7 505.0 638.1 512.5C634.5 520.0 629.6 527.2 623.8 533.0C618.0 538.8 611.8 544.1 603.3 547.3C594.8 550.5 584.5 551.9 572.6 552.4C560.7 552.9 545.2 551.9 531.6 550.4C518.0 548.9 502.6 545.4 490.7 543.2C478.8 541.0 472.1 542.0 460.0 537.1C447.9 532.2 429.4 521.4 418.0 513.6C406.6 505.8 400.9 500.5 391.4 490.1C381.8 479.7 369.2 462.1 360.7 451.2C352.1 440.3 347.3 433.8 340.1 424.6C332.9 415.4 325.8 406.2 317.6 396.0C309.4 385.8 299.4 374.1 290.9 363.2C282.4 352.3 272.2 339.4 266.4 330.5C260.6 321.6 258.5 315.6 256.1 310.0C253.7 304.4 253.9 303.8 252.0 296.9C250.1 290.0 246.9 277.0 244.9 268.4C242.9 259.8 240.5 251.0 239.9 245.0C239.3 239.0 240.1 237.0 241.4 232.6C242.7 228.2 244.6 223.0 247.8 218.4C251.0 213.8 254.8 209.7 260.6 204.9C266.4 200.2 276.0 193.9 282.6 189.9C289.2 185.9 297.1 182.5 300.0 181.0" fill="none" stroke="#1cc8c8" stroke-width="6.6" stroke-linecap="butt"/>
<path d="M354.2 173.5C359.3 175.1 374.8 179.3 385.0 183.0C395.2 186.7 404.3 189.4 415.3 195.6C426.3 201.8 436.7 210.1 451.2 220.0C465.7 229.9 485.3 242.9 502.4 254.8C519.4 266.7 537.2 279.3 553.5 291.6C569.8 303.9 587.1 315.4 600.0 328.5C612.9 341.6 624.1 359.7 631.0 370.0C637.9 380.3 638.6 382.0 641.2 390.5C643.8 399.0 645.4 411.0 646.4 421.2C647.4 431.4 647.6 440.8 647.4 451.9C647.2 463.0 646.8 477.8 645.3 487.9C643.8 498.0 641.7 505.0 638.1 512.5C634.5 520.0 629.6 527.2 623.8 533.0C618.0 538.8 611.8 544.1 603.3 547.3C594.8 550.5 584.5 551.9 572.6 552.4C560.7 552.9 545.2 551.9 531.6 550.4C518.0 548.9 502.6 545.4 490.7 543.2C478.8 541.0 472.1 542.0 460.0 537.1C447.9 532.2 429.4 521.4 418.0 513.6C406.6 505.8 400.9 500.5 391.4 490.1C381.8 479.7 369.2 462.1 360.7 451.2C352.1 440.3 347.3 433.8 340.1 424.6C332.9 415.4 325.8 406.2 317.6 396.0C309.4 385.8 299.4 374.1 290.9 363.2C282.4 352.3 272.2 339.4 266.4 330.5C260.6 321.6 258.5 315.6 256.1 310.0C253.7 304.4 253.9 303.8 252.0 296.9C250.1 290.0 246.9 277.0 244.9 268.4C242.9 259.8 240.5 251.0 239.9 245.0C239.3 239.0 240.1 237.0 241.4 232.6C242.7 228.2 244.6 223.0 247.8 218.4C251.0 213.8 254.8 209.7 260.6 204.9C266.4 200.2 276.0 193.9 282.6 189.9C289.2 185.9 297.1 182.5 300.0 181.0" fill="none" stroke="#18e6e6" stroke-width="5.8"/>
<path d="M354.2 173.5C359.3 175.1 374.8 179.3 385.0 183.0C395.2 186.7 404.3 189.4 415.3 195.6C426.3 201.8 436.7 210.1 451.2 220.0C465.7 229.9 485.3 242.9 502.4 254.8C519.4 266.7 537.2 279.3 553.5 291.6C569.8 303.9 587.1 315.4 600.0 328.5C612.9 341.6 624.1 359.7 631.0 370.0C637.9 380.3 638.6 382.0 641.2 390.5C643.8 399.0 645.4 411.0 646.4 421.2C647.4 431.4 647.6 440.8 647.4 451.9C647.2 463.0 646.8 477.8 645.3 487.9C643.8 498.0 641.7 505.0 638.1 512.5C634.5 520.0 629.6 527.2 623.8 533.0C618.0 538.8 611.8 544.1 603.3 547.3C594.8 550.5 584.5 551.9 572.6 552.4C560.7 552.9 545.2 551.9 531.6 550.4C518.0 548.9 502.6 545.4 490.7 543.2C478.8 541.0 472.1 542.0 460.0 537.1C447.9 532.2 429.4 521.4 418.0 513.6C406.6 505.8 400.9 500.5 391.4 490.1C381.8 479.7 369.2 462.1 360.7 451.2C352.1 440.3 347.3 433.8 340.1 424.6C332.9 415.4 325.8 406.2 317.6 396.0C309.4 385.8 299.4 374.1 290.9 363.2C282.4 352.3 272.2 339.4 266.4 330.5C260.6 321.6 258.5 315.6 256.1 310.0C253.7 304.4 253.9 303.8 252.0 296.9C250.1 290.0 246.9 277.0 244.9 268.4C242.9 259.8 240.5 251.0 239.9 245.0C239.3 239.0 240.1 237.0 241.4 232.6C242.7 228.2 244.6 223.0 247.8 218.4C251.0 213.8 254.8 209.7 260.6 204.9C266.4 200.2 276.0 193.9 282.6 189.9C289.2 185.9 297.1 182.5 300.0 181.0" fill="none" stroke="#139a9a" stroke-width="3.5"/>
<path d="M354.2 173.5C359.3 175.1 374.8 179.3 385.0 183.0C395.2 186.7 404.3 189.4 415.3 195.6C426.3 201.8 436.7 210.1 451.2 220.0C465.7 229.9 485.3 242.9 502.4 254.8C519.4 266.7 537.2 279.3 553.5 291.6C569.8 303.9 587.1 315.4 600.0 328.5C612.9 341.6 624.1 359.7 631.0 370.0C637.9 380.3 638.6 382.0 641.2 390.5C643.8 399.0 645.4 411.0 646.4 421.2C647.4 431.4 647.6 440.8 647.4 451.9C647.2 463.0 646.8 477.8 645.3 487.9C643.8 498.0 641.7 505.0 638.1 512.5C634.5 520.0 629.6 527.2 623.8 533.0C618.0 538.8 611.8 544.1 603.3 547.3C594.8 550.5 584.5 551.9 572.6 552.4C560.7 552.9 545.2 551.9 531.6 550.4C518.0 548.9 502.6 545.4 490.7 543.2C478.8 541.0 472.1 542.0 460.0 537.1C447.9 532.2 429.4 521.4 418.0 513.6C406.6 505.8 400.9 500.5 391.4 490.1C381.8 479.7 369.2 462.1 360.7 451.2C352.1 440.3 347.3 433.8 340.1 424.6C332.9 415.4 325.8 406.2 317.6 396.0C309.4 385.8 299.4 374.1 290.9 363.2C282.4 352.3 272.2 339.4 266.4 330.5C260.6 321.6 258.5 315.6 256.1 310.0C253.7 304.4 253.9 303.8 252.0 296.9C250.1 290.0 246.9 277.0 244.9 268.4C242.9 259.8 240.5 251.0 239.9 245.0C239.3 239.0 240.1 237.0 241.4 232.6C242.7 228.2 244.6 223.0 247.8 218.4C251.0 213.8 254.8 209.7 260.6 204.9C266.4 200.2 276.0 193.9 282.6 189.9C289.2 185.9 297.1 182.5 300.0 181.0" fill="none" stroke="#18e6e6" stroke-width="1.6"/>
<polygon points="278.0,119.0 284.9,123.5 330.0,165.7 356.3,190.6 362.0,200.0 371.3,211.9 401.1,239.7 440.9,279.4 449.0,284.0 459.4,284.5 514.6,334.6 552.2,370.0 593.1,407.9 601.3,396.6 571.6,370.0 533.0,334.6 465.5,277.3 453.2,269.1 425.3,239.7 386.9,205.5 364.1,184.9 338.5,160.0 286.3,114.2" fill="#c61212"/>
<polygon points="593.1,407.9 601.3,396.6 596.2,441.6 588.0,484.6 582.8,491.0 583.9,484.6 590.0,447.0" fill="#c81010"/>
<polygon points="278.0,119.0 284.9,123.5 330.0,165.7 356.3,190.6 362.0,200.0 371.3,211.9 401.1,239.7 440.9,279.4 449.0,284.0 459.4,284.5 514.6,334.6 552.2,370.0 593.1,407.9 590.0,447.0 583.9,484.6 582.8,491.0 554.2,493.1 507.1,491.0 482.5,485.9 460.0,472.6 444.6,459.4 418.0,430.7 393.5,400.0 360.5,359.1 327.4,319.7 313.2,299.7 304.7,282.7 299.0,264.2 293.3,240.0 285.5,198.4 281.9,170.0 277.0,121.0" fill="url(#lay)"/>
<polygon points="278.0,119.0 284.9,123.5 330.0,165.7 356.3,190.6 362.0,200.0 371.3,211.9 401.1,239.7 440.9,279.4 449.0,284.0 459.4,284.5 514.6,334.6 552.2,370.0 593.1,407.9 590.0,447.0 583.9,484.6 582.8,491.0 554.2,493.1 507.1,491.0 482.5,485.9 460.0,472.6 444.6,459.4 418.0,430.7 393.5,400.0 360.5,359.1 327.4,319.7 313.2,299.7 304.7,282.7 299.0,264.2 293.3,240.0 285.5,198.4 281.9,170.0 277.0,121.0" fill="url(#rg)" opacity=".35"/>
<clipPath id="fc"><polygon points="278.0,119.0 284.9,123.5 330.0,165.7 356.3,190.6 362.0,200.0 371.3,211.9 401.1,239.7 440.9,279.4 449.0,284.0 459.4,284.5 514.6,334.6 552.2,370.0 593.1,407.9 590.0,447.0 583.9,484.6 582.8,491.0 554.2,493.1 507.1,491.0 482.5,485.9 460.0,472.6 444.6,459.4 418.0,430.7 393.5,400.0 360.5,359.1 327.4,319.7 313.2,299.7 304.7,282.7 299.0,264.2 293.3,240.0 285.5,198.4 281.9,170.0 277.0,121.0"/></clipPath>
<g clip-path="url(#fc)">
<polygon points="277,121 281.9,170 285.5,198.4 293.3,240 299,264.2 304.7,282.7 313.2,299.7 327.4,319.7 333,318 319,297 311,280 305,262 299,238 291,196 287,168 283,128" fill="#b01010" opacity=".55"/>
<polygon points="357.8,245.3 361,243 439,318 436,322 432.5,327.2 380,278.3 370,262" fill="#a80e0e" opacity=".8"/>
<ellipse cx="440" cy="399.5" rx="13.2" ry="30" transform="rotate(15.7 440 399.5)" fill="#b40e0e" opacity=".8"/>
<ellipse cx="441.5" cy="399.5" rx="5" ry="27" transform="rotate(15.7 441.5 399.5)" fill="#f01c1c" opacity=".7"/>
<ellipse cx="502" cy="429" rx="16" ry="37" transform="rotate(19.7 502 429)" fill="#b40e0e" opacity=".8"/>
<ellipse cx="504" cy="428" rx="6.5" ry="33" transform="rotate(19.7 504 428)" fill="#f01c1c" opacity=".7"/>
<ellipse cx="573" cy="445" rx="24" ry="40" transform="rotate(36 573 445)" fill="#b00c0c" opacity=".42"/>
<ellipse cx="573" cy="445" rx="18" ry="31" transform="rotate(36 573 445)" fill="#f42020" opacity=".42"/>
<ellipse cx="573" cy="445" rx="12" ry="22" transform="rotate(36 573 445)" fill="#b00c0c" opacity=".42"/>
<ellipse cx="573" cy="445" rx="6" ry="12" transform="rotate(36 573 445)" fill="#f42020" opacity=".42"/>
<ellipse cx="318" cy="232" rx="9" ry="38" transform="rotate(14 318 232)" fill="#f21c1c" opacity=".55"/>
<ellipse cx="300" cy="160" rx="10" ry="22" transform="rotate(-8 300 160)" fill="#c81010" opacity=".35"/>
</g>
<path d="M433.8 428.3A12.2 12.2 0 1 1 449.0 410.2" fill="none" stroke="#1fd61f" stroke-width="6.0"/><path d="M434.3 427.4A11.2 11.2 0 1 1 448.2 410.8" fill="none" stroke="#0e8a0e" stroke-width="0.5"/><path d="M433.4 429.2A13.2 13.2 0 1 1 449.8 409.6" fill="none" stroke="#0e8a0e" stroke-width="0.5"/>
<path d="M491.1 462.6A10.7 10.7 0 1 1 507.6 449.1" fill="none" stroke="#1fd61f" stroke-width="5.7"/><path d="M491.9 462.0A9.7 9.7 0 1 1 506.8 449.7" fill="none" stroke="#0e8a0e" stroke-width="0.5"/><path d="M490.4 463.3A11.6 11.6 0 1 1 508.3 448.5" fill="none" stroke="#0e8a0e" stroke-width="0.5"/>
<ellipse cx="440.6" cy="423" rx="5.5" ry="3" transform="rotate(-25 440.6 423)" fill="#2a74f0"/><ellipse cx="440.3" cy="423.2" rx="3" ry="1.5" transform="rotate(-25 440.3 423.2)" fill="#9a9aa8"/>
<ellipse cx="499" cy="462" rx="4" ry="1.6" transform="rotate(-25 499 462)" fill="#a8a8b0"/>
<path d="M314.5 281C314 273 319 268 326.5 266C325 274 321 279 314.5 281Z" fill="#14c814"/>
<g fill="#fff"><rect x="423.7" y="427.7" width="1.6" height="1.6"/><rect x="447.7" y="413.2" width="1.6" height="1.6"/><rect x="489.2" y="462.2" width="1.6" height="1.6"/><rect x="511.7" y="439.2" width="1.6" height="1.6"/><rect x="313.7" y="283.2" width="1.6" height="1.6"/><rect x="592.2" y="407.2" width="1.6" height="1.6"/><rect x="582.2" y="385.2" width="1.6" height="1.6"/><rect x="328.9" y="203.2" width="1.6" height="1.6"/><rect x="333.2" y="205.2" width="1.6" height="1.6"/><rect x="347.4" y="213.7" width="1.6" height="1.6"/><rect x="348.9" y="221.2" width="1.6" height="1.6"/><rect x="356.0" y="221.2" width="1.6" height="1.6"/><rect x="364.5" y="228.8" width="1.6" height="1.6"/><rect x="373.1" y="235.4" width="1.6" height="1.6"/><rect x="382.8" y="241.9" width="1.6" height="1.6"/><rect x="391.7" y="249.0" width="1.6" height="1.6"/><rect x="400.6" y="256.1" width="1.6" height="1.6"/><rect x="410.4" y="263.2" width="1.6" height="1.6"/><rect x="429.1" y="278.3" width="1.6" height="1.6"/><rect x="439.7" y="289.9" width="1.6" height="1.6"/><rect x="349.0" y="265.9" width="1.6" height="1.6"/><rect x="356.1" y="272.1" width="1.6" height="1.6"/><rect x="355.2" y="189.2" width="1.6" height="1.6"/><rect x="370.2" y="211.2" width="1.6" height="1.6"/></g>
<path d="M356 243.6L370.2 268.5" stroke="#e0d0d0" stroke-width=".8" fill="none"/>
<polygon points="380,278.3 432.5,327.2 429,338.8 382.7,295.2" fill="#a0e6e6" fill-opacity="1" stroke="#1c64f2" stroke-width="1.5" stroke-linejoin="round"/>
<path d="M393.4 269.4L401.4 324.5" stroke="#2a6ef0" stroke-width="1.5" fill="none"/>
<polygon points="391.6,256.9 398.7,264.9 393.4,269.4 386.6,264" fill="#1c64f2"/>
<path d="M401.4 325.4L317.6 393.9" stroke="#2f9e4f" stroke-width="1.2" fill="none"/>
<polygon points="309.4,403.1 316.5,391.9 322.7,399" fill="#2f9e4f"/>
<polyline points="368.4,214.8 395.4,239.7 438.9,281.4 445.0,287.0 449.1,287.6" fill="none" stroke="#1ed21e" stroke-width="1.6"/>
<polyline points="379.8,204.1 418.9,239.7 453.2,269.1 457.0,272.0" fill="none" stroke="#1ed21e" stroke-width="1.6"/>
<polyline points="278.0,119.0 284.9,123.5 330.0,165.7 356.3,190.6 362.0,200.0 371.3,211.9 401.1,239.7 440.9,279.4 449.0,284.0 459.4,284.5 514.6,334.6 552.2,370.0 593.1,407.9" fill="none" stroke="#22d4ee" stroke-width="2" stroke-linejoin="round"/>
<polyline points="356.3,190.6 362.0,200.0 371.3,211.9" fill="none" stroke="#1a5af0" stroke-width="1.6"/>
<polyline points="593.1,407.9 590.0,447.0 583.9,484.6 582.8,491.0 554.2,493.1 507.1,491.0 482.5,485.9 460.0,472.6 444.6,459.4 418.0,430.7 393.5,400.0 360.5,359.1 327.4,319.7 313.2,299.7 304.7,282.7 299.0,264.2 293.3,240.0 285.5,198.4 281.9,170.0 277.0,121.0 278.0,119.0" fill="none" stroke="#1c64f6" stroke-width="2.4" stroke-linejoin="round"/>
<polygon points="280.5,118.5 285.3,114.3 288.2,126.5" fill="#f8f8f8"/>
<rect x="282.8" y="110.8" width="2.6" height="2.6" fill="#fff" transform="rotate(40 284 112)"/>
</svg>
<!-- header -->
<div id="hdr" class="abs"></div>
<svg class="abs" style="left:12px;top:8px" width="16" height="11" viewBox="0 0 16 11" fill="#fff"><rect x="0.1" y="7.1" width="3" height="3" rx=".6"/><rect x="6.1" y="7.1" width="3" height="3" rx=".6"/><rect x="12.1" y="7.1" width="3" height="3" rx=".6"/><path d="M4.1 .4h2.5v6.8h-3.5zM8.6 .4h2.5l1 6.8h-3.5z"/></svg>
<div class="t" id="logo" style="left:29.5px;top:7.5px;font-size:12.2px;color:#fff;letter-spacing:-0.150px">UltiMaker Cura</div>
<div class="t nav" id="n1" style="left:421.5px;top:10px">PREPARE</div>
<div class="abs pill" style="left:474px;top:6px;width:66px;height:16px"></div>
<div class="t nav" id="n2" style="left:490.5px;top:10px;color:#0a0840">PREVIEW</div>
<div class="t nav" id="n3" style="left:560.5px;top:10px">MONITOR</div>
<div class="abs hbtn" style="left:918px;top:5px;width:45px;height:17px"></div>
<div class="t" id="mk" style="left:921.5px;top:9.8px;font-size:8.8px;color:#fff">Marketplace</div>
<svg class="abs" style="left:972px;top:7px" width="14" height="14" viewBox="0 0 14 14" fill="#fff"><clipPath id="gc"><circle cx="6.9" cy="6.9" r="7.5"/></clipPath><g clip-path="url(#gc)"><rect x="0.2" y="0.2" width="3.4" height="3.4" rx=".8"/><rect x="0.2" y="5.2" width="3.4" height="3.4" rx=".8"/><rect x="0.2" y="10.2" width="3.4" height="3.4" rx=".8"/><rect x="5.2" y="0.2" width="3.4" height="3.4" rx=".8"/><rect x="5.2" y="5.2" width="3.4" height="3.4" rx=".8"/><rect x="5.2" y="10.2" width="3.4" height="3.4" rx=".8"/><rect x="10.2" y="0.2" width="3.4" height="3.4" rx=".8"/><rect x="10.2" y="5.2" width="3.4" height="3.4" rx=".8"/><rect x="10.2" y="10.2" width="3.4" height="3.4" rx=".8"/></g></svg>
<div class="abs hbtn" style="left:995px;top:5px;width:27px;height:17px"></div>
<div class="t" id="si" style="left:998px;top:9.8px;font-size:8.8px;color:#fff">Sign in</div>

<!-- view bar -->
<div id="viewbar" class="abs"></div>
<div class="abs" style="left:245px;top:31px;width:1px;height:30px;background:#dcdcdc"></div>
<div class="t g" id="vt" style="left:30px;top:41.5px;font-size:8.5px">View type</div>
<div class="t" id="lv" style="left:74px;top:41.5px;font-size:8.5px">Layer view</div>
<svg class="abs" style="left:229px;top:43px" width="8" height="5" viewBox="0 0 8 5"><path d="M1.2 .9l2.8 2.7 2.8-2.7" fill="none" stroke="#6e6e6e" stroke-width="1.15"/></svg>
<div class="t g" id="cs" style="left:253px;top:41.5px;font-size:8.5px">Color scheme</div>
<div class="t" id="lt" style="left:311px;top:41.5px;font-size:8.5px">Line Type</div>
<svg class="abs" style="left:676px;top:43px" width="8" height="5" viewBox="0 0 8 5"><path d="M1.2 .9l2.8 2.7 2.8-2.7" fill="none" stroke="#6e6e6e" stroke-width="1.15"/></svg>
<div id="setbar" class="abs"></div>
<svg class="abs" style="left:700px;top:38px" width="18" height="15" viewBox="0 0 18 15" fill="none" stroke="#0a0840" stroke-width="1.3"><path d="M.8 3H16.5M.8 7.5H16.5M.8 12H16.5"/><circle cx="10.3" cy="3" r="1.7" fill="#f0f0f0"/><circle cx="12.9" cy="7.5" r="1.7" fill="#f0f0f0"/><circle cx="6.1" cy="12" r="1.7" fill="#f0f0f0"/></svg>
<div class="t" id="sq" style="left:722.5px;top:41.5px;font-size:9px">Standard Quality - 0.2mm</div>
<svg class="abs" style="left:845.5px;top:39.5px" width="13" height="13" viewBox="0 0 13 13"><rect x=".2" y=".2" width="12.6" height="12.6" rx="2" fill="#0a0840"/><g fill="#f0f0f0"><circle cx="6.5" cy="3.2" r="1.55"/><circle cx="3.2" cy="6.5" r="1.55"/><circle cx="9.8" cy="6.5" r="1.55"/><circle cx="6.5" cy="9.8" r="1.55"/></g></svg>
<div class="t" id="pc" style="left:864px;top:41.5px;font-size:9px">100%</div>
<svg class="abs" style="left:896px;top:38.5px" width="13" height="14" viewBox="0 0 13 14" fill="none" stroke="#0a0840" stroke-width="1.3"><path d="M6.5 1l4.3 4.3-4.3 4.3-4.3-4.3z"/><path d="M.8 13.5V8.5M3.6 13.5V10.5M6.5 13.5V12M9.4 13.5V10.5M12.2 13.5V8.5"/></svg>
<div class="t" id="on" style="left:914.5px;top:41.5px;font-size:9px">On</div>
<svg class="abs" style="left:936.5px;top:38.5px" width="13" height="14" viewBox="0 0 13 14" fill="none" stroke="#0a0840" stroke-width="1.3"><path d="M6.5 .5V7M3.6 4.5l2.9 2.9 2.9-2.9"/><path d="M1 6.5V10.3H12V6.5"/><path d="M.5 13H12.5" stroke-dasharray="1.5 1.2"/></svg>
<div class="t" id="off" style="left:954.5px;top:41.5px;font-size:9px">Off</div>
<svg class="abs" style="left:981px;top:43px" width="8" height="5" viewBox="0 0 8 5"><path d="M1.2 .9l2.8 2.7 2.8-2.7" fill="none" stroke="#6e6e6e" stroke-width="1.15"/></svg>

<div class="abs panel" style="left:-6px;top:162px;width:28px;height:257px;border-radius:0 3px 3px 0"></div>
<div class="abs" style="left:-7px;top:164.5px;width:26px;height:26px;border-radius:13px;background:#e4edfb"></div>
<svg class="abs" style="left:-1px;top:171px" width="13" height="13" viewBox="0 0 13 13" fill="none" stroke="#0a0840" stroke-width="1.4"><path d="M6.5 1V12M1 6.5H12"/><path d="M4.6 2.8L6.5 .9l1.9 1.9M4.6 10.2l1.9 1.9 1.9-1.9M2.8 4.6L.9 6.5l1.9 1.9M10.2 4.6l1.9 1.9-1.9 1.9" stroke-width="1.3"/></svg>
<svg class="abs" style="left:-1px;top:203.5px" width="13" height="13" viewBox="0 0 13 13" fill="none" stroke="#0a0840" stroke-width="1.4"><path d="M3 1H11.8V10M.8 5.6H7.4V12.2H.8z"/><path d="M6 6.9l4-4M7.3 2.9H10V5.6" stroke-width="1.2"/></svg>
<svg class="abs" style="left:-1px;top:235.5px" width="13" height="14" viewBox="0 0 13 14" fill="none" stroke="#0a0840" stroke-width="1.4"><path d="M2 4.6A5.3 5.3 0 0 1 11.8 7.6"/><path d="M.9 1.5V5.3H4.7" stroke-width="1.3"/><path d="M11.8 7.6A5.3 5.3 0 0 1 1.3 8.5" stroke-dasharray="1.3 1.3" stroke-width="1.1"/></svg>
<svg class="abs" style="left:-1px;top:267.5px" width="13" height="14" viewBox="0 0 13 14" fill="#0a0840" stroke="#0a0840"><path d="M6.5 .5V13.5" stroke-width="1.1" stroke-dasharray="1.6 1.1" fill="none"/><path d="M.8 4l3.6 3L.8 10z" fill="none" stroke-width="1.1"/><path d="M12.2 4L8.6 7l3.6 3z" stroke-width="1.1"/></svg>
<svg class="abs" style="left:-1px;top:300px" width="13" height="13" viewBox="0 0 13 13" fill="#0a0840"><rect x="0" y=".5" width="5.3" height="5.3"/><rect x="0" y="7.2" width="5.3" height="5.3"/><rect x="7.9" y="7.9" width="3.9" height="3.9" fill="none" stroke="#0a0840" stroke-width="1.4"/><path d="M7.4 5.6l4.6-4.6" stroke="#0a0840" stroke-width="1.2"/><circle cx="8.3" cy="1.7" r="1"/><circle cx="11.3" cy="4.9" r="1"/></svg>
<svg class="abs" style="left:-1px;top:331.5px" width="13" height="14" viewBox="0 0 13 14" fill="none" stroke="#0a0840" stroke-width="1.4"><path d="M6.5 1.3l4.2 4.2-4.2 4.2-4.2-4.2z"/><path d="M.8 13.5V11.5M3.4 13.5V12.3M6 13.5V12.6" stroke-width="1.1"/><path d="M9 10.6l3 3M12 10.6l-3 3" stroke-width="1.2"/></svg>
<svg class="abs" style="left:-1px;top:364px" width="13" height="13" viewBox="0 0 13 13" fill="none" stroke="#c9c9d6" stroke-width="1.2"><path d="M1 9.5L9.5 1l2.5 2.5L3.5 12z"/><path d="M4.5 8.5l.9.9M6.4 6.6l.9.9M8.3 4.7l.9.9" stroke-width=".9"/></svg>
<svg class="abs" style="left:0px;top:395.5px" width="11" height="15" viewBox="0 0 11 15" fill="#0a0840"><path d="M.5 2.5C.5 1.3 2.7.5 5.5.5s5 .8 5 2V12.5c0 1.2-2.2 2-5 2s-5-.8-5-2z"/></svg>

<div class="abs panel" style="left:29px;top:162px;width:114px;height:117.5px"></div>
<svg class="abs" style="left:24px;top:172px" width="7" height="11" viewBox="0 0 7 11"><path d="M6.5 0L.8 5.5 6.5 11z" fill="#fff"/><path d="M6 .3L.8 5.5 6 10.7" fill="none" stroke="#d4d4d4" stroke-width="1"/></svg>
<div class="t" style="left:37.5px;top:174.5px;font-size:7.5px;color:#e8333a">X</div>
<div class="t" style="left:37.5px;top:195px;font-size:7.5px;color:#3ab04a">Y</div>
<div class="t" style="left:37.5px;top:215.5px;font-size:7.5px;color:#2a72f0">Z</div>
<div class="fld" style="left:46px;top:170px;width:88.5px"><span class="v">0.1376</span><span class="u">mm</span></div>
<div class="fld" style="left:46px;top:190.5px;width:88.5px"><span class="v">13.439</span><span class="u">mm</span></div>
<div class="fld" style="left:46px;top:211px;width:88.5px"><span class="v">0</span><span class="u">mm</span></div>
<div class="cb" style="left:46px;top:238.5px"></div>
<div class="t" id="lm" style="left:60px;top:240.7px;font-size:8px">Lock Model</div>
<div class="cb" style="left:46px;top:256.5px"></div>
<svg class="abs" style="left:49px;top:259.8px" width="5" height="4" viewBox="0 0 5 4"><path d="M.6 2l1.3 1.3L4.4.6" fill="none" stroke="#191919" stroke-width="1.2"/></svg>
<div class="t" id="ddm" style="left:60px;top:258.7px;font-size:8px">Drop Down Model</div>

<div class="abs panel" style="left:689px;top:78px;width:307px;height:350.5px;background:#f2f2f2"></div>
<div class="abs" style="left:690px;top:79px;width:305px;height:345px;background:#fff;border-bottom:1px solid #d4d4d4"></div>
<div class="abs" style="left:690px;top:101.5px;width:305px;height:1px;background:#d8d8d8"></div>
<div class="abs" style="left:838px;top:426px;width:8px;height:1px;border-top:1px dotted #a0a0a0"></div>
<div class="t" id="ps" style="left:697px;top:86.8px;font-size:9.2px">Print settings</div>
<svg class="abs" style="left:981px;top:87.5px" width="6" height="6" viewBox="0 0 6 6"><path d="M.6 .6l4.8 4.8M5.4 .6L.6 5.4" stroke="#4a4a4a" stroke-width="1" fill="none"/></svg>
<div class="t" id="pf" style="left:697.5px;top:115.7px;font-size:9.2px">Profile</div>
<div class="fld" style="left:762px;top:111px;width:185px;height:17px"></div>
<div class="t" id="sq2" style="left:770px;top:115.8px;font-size:8px">Standard Quality<span style="color:#c4c4c4"> - 0.2mm</span></div>
<svg class="abs" style="left:913px;top:115px" width="9" height="9" viewBox="0 0 9 9"><path d="M4.5 .3l1.3 2.8 3 .3-2.3 2 .7 3-2.7-1.6-2.7 1.6.7-3-2.3-2 3-.3z" fill="#3a3a3a"/></svg>
<svg class="abs" style="left:930.5px;top:117.5px" width="8" height="5" viewBox="0 0 8 5"><path d="M1.2 .9l2.8 2.7 2.8-2.7" fill="none" stroke="#6a6a6a" stroke-width="1.150"/></svg>
<svg class="abs" style="left:955.5px;top:114.5px" width="11" height="11" viewBox="0 0 11 11"><g transform="translate(.5 .3)"><path d="M2.3 3.3A4 4 0 1 1 1.5 7.5" fill="none" stroke="#196ef0" stroke-width="1.4"/><path d="M.6 .8V4H3.8" fill="none" stroke="#196ef0" stroke-width="1.3"/></g></svg>
<svg class="abs" style="left:976px;top:115px" width="11" height="11" viewBox="0 0 11 11" fill="none" stroke="#196ef0" stroke-width="1.3"><path d="M.8 1.8a1 1 0 0 1 1-1H8l2.2 2.2V9.2a1 1 0 0 1-1 1H1.8a1 1 0 0 1-1-1z"/><path d="M3 .8V3.5H7.3V.8M2.8 10.2V6.3H8.2V10.2" stroke-width="1.1"/></svg>
<div class="fld" style="left:705.5px;top:136px;width:254.5px;height:15.5px"></div>
<svg class="abs" style="left:715px;top:137.5px" width="10" height="10" viewBox="0 0 10 10" fill="none" stroke="#191919" stroke-width="1.3"><circle cx="6" cy="4" r="2.9"/><path d="M4 6.2L.8 9.4"/></svg>
<div class="t" id="ss" style="left:734px;top:140.6px;font-size:7.6px;font-style:italic;color:#b4b4b4">Search settings</div>
<div class="abs" style="left:965.5px;top:139px;width:13px;height:1.5px;background:#0a0840"></div>
<div class="abs" style="left:965.5px;top:144.2px;width:13px;height:1.5px;background:#0a0840"></div>
<div class="abs" style="left:965.5px;top:149.4px;width:13px;height:1.5px;background:#0a0840"></div>
<div class="abs" style="left:705.5px;top:163px;width:265.5px;height:1px;background:#e6e6e6"></div>
<div class="abs" style="left:690.5px;top:164px;width:305px;height:223.5px;overflow:hidden">
<div class="t r0" id="row0" style="left:20.5px;top:7.0px;font-size:8px;font-style:italic;">Infill Density</div>
<div class="fld" style="left:192.0px;top:2.8px;width:88.5px;height:15.5px"><span class="v" style="top:4.4px;left:4px">100.0</span><span class="u" style="top:4.4px">%</span></div>
<svg class="abs" style="left:173.5px;top:4.8px" width="11" height="11" viewBox="0 0 11 11"><g transform="translate(.5 .3)"><path d="M2.3 3.3A4 4 0 1 1 1.5 7.5" fill="none" stroke="#196ef0" stroke-width="1.4"/><path d="M.6 .8V4H3.8" fill="none" stroke="#196ef0" stroke-width="1.3"/></g></svg>
<div class="t r1" id="row1" style="left:28.5px;top:26.8px;font-size:8px;">Infill Line Distance</div>
<div class="fld" style="left:192.0px;top:22.6px;width:88.5px;height:15.5px"><span class="v" style="top:4.4px;left:4px">0.4</span><span class="u" style="top:4.4px">mm</span></div>
<div class="t r0" id="row2" style="left:20.5px;top:46.7px;font-size:8px;">Infill Pattern</div>
<div class="fld" style="left:192.0px;top:42.5px;width:88.5px;height:15.5px"><span class="v" style="top:4.4px;left:4px">Lines</span></div>
<svg class="abs" style="left:264.5px;top:47.8px" width="8" height="5" viewBox="0 0 8 5"><path d="M1.2 .9l2.8 2.7 2.8-2.7" fill="none" stroke="#6a6a6a" stroke-width="1.150"/></svg>
<div class="t r0" id="row3" style="left:20.5px;top:66.5px;font-size:8px;">Connect Infill Lines</div>
<div class="cb" style="left:192.0px;top:64.8px;width:10.5px;height:10.5px"></div>
<div class="t r0" id="row4" style="left:20.5px;top:86.3px;font-size:8px;">Infill Line Directions</div>
<div class="fld" style="left:192.0px;top:82.1px;width:88.5px;height:15.5px;background:#fff"><span class="v" style="top:4.4px;left:4px">[ ]</span><span class="u" style="top:4.4px"></span></div>
<div class="t r0" id="row5" style="left:20.5px;top:106.2px;font-size:8px;">Infill X Offset</div>
<div class="fld" style="left:192.0px;top:102.0px;width:88.5px;height:15.5px"><span class="v" style="top:4.4px;left:4px">0.0</span><span class="u" style="top:4.4px">mm</span></div>
<div class="t r0" id="row6" style="left:20.5px;top:126.0px;font-size:8px;">Infill Y Offset</div>
<div class="fld" style="left:192.0px;top:121.8px;width:88.5px;height:15.5px"><span class="v" style="top:4.4px;left:4px">0.0</span><span class="u" style="top:4.4px">mm</span></div>
<div class="t r0" id="row7" style="left:20.5px;top:145.8px;font-size:8px;">Randomize Infill Start</div>
<div class="cb" style="left:192.0px;top:144.1px;width:10.5px;height:10.5px"></div>
<div class="t r0" id="row8" style="left:20.5px;top:165.6px;font-size:8px;">Infill Line Multiplier</div>
<div class="fld" style="left:192.0px;top:161.4px;width:88.5px;height:15.5px"><span class="v" style="top:4.4px;left:4px">1</span><span class="u" style="top:4.4px"></span></div>
<div class="t r0" id="row9" style="left:20.5px;top:185.5px;font-size:8px;">Infill Overlap Percentage</div>
<div class="fld" style="left:192.0px;top:181.3px;width:88.5px;height:15.5px"><span class="v" style="top:4.4px;left:4px">30.0</span><span class="u" style="top:4.4px">%</span></div>
<div class="t r1" id="row10" style="left:28.5px;top:205.3px;font-size:8px;">Infill Overlap</div>
<div class="fld" style="left:192.0px;top:201.1px;width:88.5px;height:15.5px"><span class="v" style="top:4.4px;left:4px">0.0</span><span class="u" style="top:4.4px">mm</span></div>
<div class="fld" style="left:192.0px;top:220.9px;width:88.5px;height:15.5px"><span class="v" style="top:4.4px;left:4px"></span><span class="u" style="top:4.4px"></span></div>
</div>
<div class="abs" style="left:690.5px;top:387.5px;width:305px;height:1px;background:#d8d8d8"></div>
<div class="abs" style="left:976.5px;top:220.5px;width:5px;height:11.5px;border-radius:2.5px;background:#0a0840"></div>
<div class="abs" style="left:697.5px;top:396px;width:88.5px;height:20.5px;border:1px solid #196ef0;border-radius:2px;background:#fff"></div>
<svg class="abs" style="left:708px;top:401.5px" width="6" height="10" viewBox="0 0 6 10"><path d="M5 .8L1 5l4 4.2" fill="none" stroke="#196ef0" stroke-width="1.3"/></svg>
<div class="t" id="rec" style="left:721.5px;top:402.7px;font-size:8.6px;color:#196ef0">Recommended</div>
<div class="abs" style="left:1014px;top:134px;width:3px;height:262px;background:#0a0840"></div>
<div class="abs" style="left:1009px;top:127.5px;width:13px;height:13px;border-radius:6.5px;background:#0a0840"></div>
<div class="abs" style="left:1009px;top:389.5px;width:13px;height:13px;border-radius:6.5px;background:#0a0840"></div>
<div class="abs" style="left:1005.5px;top:113px;width:22px;height:12px;background:#fff;border:1px solid #d4d4d4;border-radius:2px"></div>
<svg class="abs" style="left:1012px;top:124px" width="7" height="4" viewBox="0 0 7 4"><path d="M0 0L3.5 3.5 7 0z" fill="#fff"/><path d="M0 .3L3.5 3.5 7 .3" fill="none" stroke="#d4d4d4" stroke-width=".8"/></svg>
<div class="t" id="l143" style="left:1009.5px;top:115.5px;font-size:7.6px">143</div>
<div class="abs panel" style="left:807px;top:469px;width:210px;height:79px"></div>
<svg class="abs" style="left:821px;top:481.5px" width="11" height="11" viewBox="0 0 11 11" fill="none" stroke="#0a0840" stroke-width="1.2"><circle cx="5.5" cy="5.5" r="4.6"/><path d="M5.5 2.6V5.6H8.2"/></svg>
<div class="t" id="tm" style="left:836.5px;top:482.5px;font-size:9px;font-weight:bold">4 hours 13 minutes</div>
<svg class="abs" style="left:990.5px;top:481.5px" width="11" height="11" viewBox="0 0 11 11" fill="none" stroke="#0a0840" stroke-width="1.2"><circle cx="5.5" cy="5.5" r="4.6"/><path d="M5.5 4.8V8.2M5.5 2.6V3.8" stroke-width="1.3"/></svg>
<svg class="abs" style="left:821px;top:499px" width="12" height="12" viewBox="0 0 12 12" fill="none" stroke="#0a0840" stroke-width="1.2"><circle cx="6" cy="5.5" r="4.6"/><circle cx="6.4" cy="5.2" r="1.4" fill="#0a0840"/><path d="M6.4 5.2L9 2.4M1.6 7.5C.8 9 .7 10.3 1 11.3H4"/></svg>
<div class="t g2" id="mat" style="left:836.5px;top:501px;font-size:8px;color:#5a5a5a">36g · 11.90m</div>
<div class="abs" style="left:821px;top:516.5px;width:182px;height:20px;background:#196ef0;border-radius:1px"></div>
<div class="t" id="sv" style="left:889px;top:522.5px;font-size:8.6px;color:#fff">Save to Disk</div>

<svg class="abs" style="left:30.5px;top:485.5px" width="7" height="5" viewBox="0 0 7 5"><path d="M.7 4L3.5 1l2.8 3" fill="none" stroke="#5a5a5a" stroke-width="1"/></svg>
<div class="t" id="ol" style="left:46px;top:484px;font-size:7.8px;color:#5a5a5a">Object list</div>
<svg class="abs" style="left:31px;top:501.5px" width="10" height="10" viewBox="0 0 10 10"><path d="M.8 9.2H9" stroke="#3a3a3a" stroke-width="1" fill="none"/><path d="M1.5 7.5l.5-2L7 .8l1.4 1.4L3.5 7z" fill="#3a3a3a"/></svg>
<div class="t" id="on2" style="left:50px;top:503px;font-size:7.8px;color:#6a6a6a">CE3E3V2_the other side</div>
<div class="t" id="dim" style="left:30px;top:519.5px;font-size:7.6px;color:#6a6a6a">80.2 x 29.3 x 33.2 mm</div>
<svg class="abs" style="left:30px;top:536px" width="96" height="16" viewBox="0 0 96 16" fill="none" stroke="#4a4a4a" stroke-width="1.1" stroke-linejoin="round">
<path d="M7.5 1.5l5.5 3v7l-5.5 3-5.5-3v-7zM2 4.5l5.5 3 5.5-3M7.5 7.5v7"/>
<g transform="translate(20 0)"><path d="M2 5h8v9H2zM2 5l3-3h8l-3 3M13 2v9l-3 3" /><path d="M2 5h8v9H2z" fill="#4a4a4a"/></g>
<g transform="translate(39.5 0)"><path d="M2 5h8v9H2zM2 5l3-3h8l-3 3M13 2v9l-3 3"/><path d="M2 5l3-3h8l-3 3z" fill="#4a4a4a"/></g>
<g transform="translate(59.5 0)"><path d="M5 5h8v9H5zM5 5L2 2h8l3 3M2 2v9l3 3"/><path d="M2 2v9l3 3V5z" fill="#4a4a4a"/></g>
<g transform="translate(79.5 0)"><path d="M2 5h8v9H2zM2 5l3-3h8l-3 3M13 2v9l-3 3"/><path d="M10 5l3-3v9l-3 3z" fill="#4a4a4a"/></g>
</svg>
<!-- sim slider -->
<svg class="abs" style="left:323px;top:540px" width="10" height="11" viewBox="0 0 10 11"><path d="M1.5 1.2L8.5 5.5 1.5 9.8z" fill="none" stroke="#0a0840" stroke-width="1.2" stroke-linejoin="round"/></svg>
<div class="abs" style="left:343px;top:544px;width:262px;height:3.4px;background:#0a0840;border-radius:1.5px"></div>
<div class="abs" style="left:598.5px;top:539.5px;width:12.5px;height:12.5px;border-radius:6.3px;background:#0a0840"></div>
<!-- bottom strip -->
<div class="abs" style="left:0;top:559px;width:1024px;height:3px;background:#c9c9c9;overflow:hidden"><div class="abs" style="left:0;top:0;width:117.5px;height:3px;background:#000"></div><div class="t" style="left:155px;top:.6px;font-size:7.5px;color:#3a3a3a">New Volume (F:)</div></div>

</body></html>
